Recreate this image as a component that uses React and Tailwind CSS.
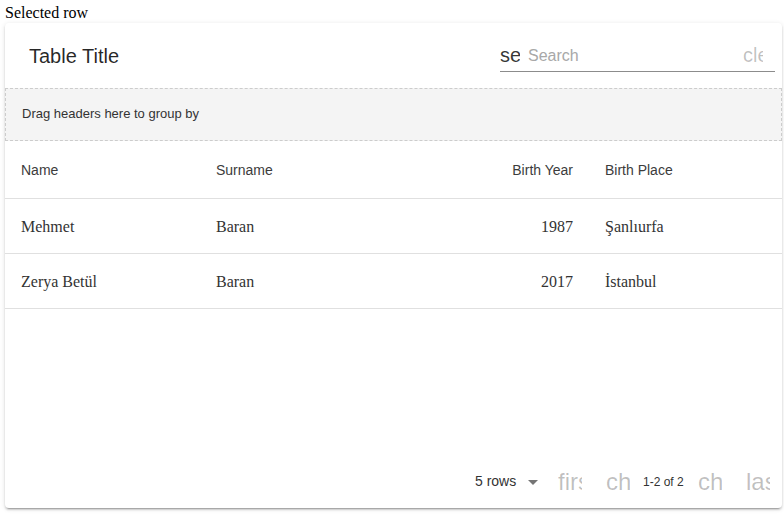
import React from 'react';

const sans = { fontFamily: '"Liberation Sans", Arial, sans-serif' };
const serif = { fontFamily: '"Liberation Serif", "Times New Roman", serif' };

const columns = [
  { key: 'name', title: 'Name' },
  { key: 'surname', title: 'Surname' },
  { key: 'birthYear', title: 'Birth Year', numeric: true },
  { key: 'birthCity', title: 'Birth Place' },
];

const rows = [
  { name: 'Mehmet', surname: 'Baran', birthYear: 1987, birthCity: 'Şanlıurfa' },
  { name: 'Zerya Betül', surname: 'Baran', birthYear: 2017, birthCity: 'İstanbul' },
];

// icon font isn't loaded, so the ligature names show as clipped text
function LigatureIcon({ name, size, className }) {
  return (
    <span
      className={`inline-block overflow-hidden whitespace-nowrap leading-none ${size} ${className}`}
      style={sans}
    >
      {name}
    </span>
  );
}

function PagerButton({ name }) {
  return (
    <div className="w-[48px] h-[48px] flex items-center justify-center">
      <LigatureIcon name={name} size="w-[24px] text-[24px]" className="text-black/25" />
    </div>
  );
}

export default function App() {
  return (
    <div className="w-[784px] h-[514px] bg-white overflow-hidden">
      <div className="h-[23px] pl-[5px] pt-[4px] text-[16px] text-black leading-[18px]" style={serif}>
        Selected row
      </div>

      <div
        className="ml-[5px] w-[777px] h-[485px] bg-white rounded-[4px] flex flex-col shadow-[0px_3px_1px_-2px_rgba(0,0,0,0.2),0px_2px_2px_0px_rgba(0,0,0,0.14),0px_1px_5px_0px_rgba(0,0,0,0.12)]"
        style={sans}
      >
        {/* Toolbar */}
        <div className="h-[65px] flex items-center pl-[24px] pr-[7px]">
          <div className="flex-1 text-[20px] text-black/85">Table Title</div>
          <div className="w-[275px] h-[32px] flex items-center border-b border-black/45">
            <LigatureIcon name="search" size="w-[20px] text-[20px]" className="text-black/80 mr-[8px]" />
            <div className="flex-1 text-[16px] text-[#a8a8a8] pt-[1px]">Search</div>
            <LigatureIcon name="clear" size="w-[20px] text-[20px]" className="text-black/25 mr-[12px]" />
          </div>
        </div>

        {/* Group by bar */}
        <div className="h-[53px] flex items-center pl-[16px] pb-[2px] bg-[#f4f4f4] border border-dashed border-[#cccccc] text-[13px] text-[#333]">
          Drag headers here to group by
        </div>

        {/* Header */}
        <div className="h-[58px] pt-[2px] grid grid-cols-[195px_195px_194px_193px] items-center border-b border-[#e0e0e0] text-[14px] text-[#3c3c3c]">
          {columns.map((c) => (
            <div key={c.key} className={`px-[16px] ${c.numeric ? 'text-right' : ''}`}>
              {c.title}
            </div>
          ))}
        </div>

        {/* Rows */}
        {rows.map((r, i) => (
          <div
            key={i}
            className="h-[55px] pt-[2px] grid grid-cols-[195px_195px_194px_193px] items-center border-b border-[#e0e0e0] text-[16px] text-[#333]"
            style={serif}
          >
            {columns.map((c) => (
              <div key={c.key} className={`px-[16px] ${c.numeric ? 'text-right' : ''}`}>
                {r[c.key]}
              </div>
            ))}
          </div>
        ))}

        <div className="flex-1" />

        {/* Pagination */}
        <div className="h-[53px] flex items-center justify-end">
          <div className="flex items-center w-[71px] text-[14px] text-[#333]">
            <span>5 rows</span>
            <svg width="10" height="5" viewBox="0 0 10 5" className="ml-[12px] mt-[1px]">
              <path d="M0 0 L5 5 L10 0 Z" fill="rgba(0,0,0,0.54)" />
            </svg>
          </div>
          <PagerButton name="first_page" />
          <PagerButton name="chevron_left" />
          <div className="w-[44px] pl-[1px] text-[12px] text-[#333]">1-2 of 2</div>
          <PagerButton name="chevron_right" />
          <PagerButton name="last_page" />
        </div>
      </div>
    </div>
  );
}
